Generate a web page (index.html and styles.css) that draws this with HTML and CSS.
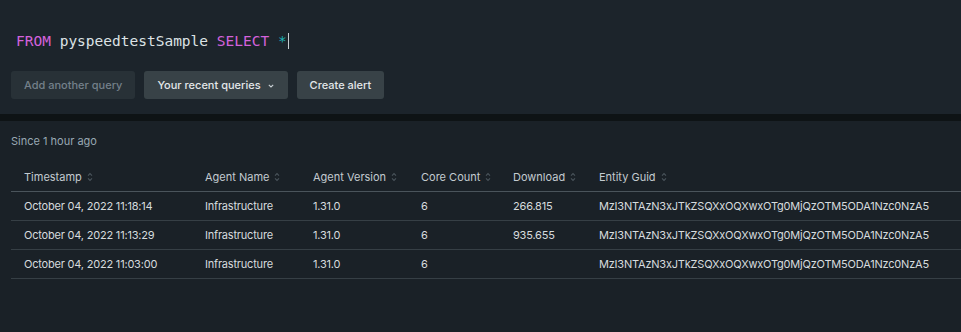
FILE: index.html
```html
<!DOCTYPE html>
<html>
    <head>
        <title>Query results</title>
        <meta charset="UTF-8">
        <meta name="viewport" content="width=device-width, initial-scale=1.0">
        <link rel="stylesheet" href="styles.css">
    </head>
    <body>
        <div class="editor">
            <div class="query"><span class="kw">FROM</span> pyspeedtestSample <span class="kw">SELECT</span> <span class="star">*</span><span class="cursor"></span></div>
            <div class="actions">
                <button class="btn btn-disabled">Add another query</button>
                <button class="btn">Your recent queries
                    <svg class="caret" width="8" height="6" viewBox="0 0 8 6"><path d="M1.8 1.8 L4 4 L6.2 1.8" fill="none" stroke="#c9d0d4" stroke-width="1.1"/></svg>
                </button>
                <button class="btn">Create alert</button>
            </div>
        </div>
        <div class="band"></div>
        <div class="results">
            <div class="since">Since 1 hour ago</div>
            <table class="grid">
                <colgroup>
                    <col style="width:181px">
                    <col style="width:108px">
                    <col style="width:108px">
                    <col style="width:92px">
                    <col style="width:86px">
                    <col>
                </colgroup>
                <thead>
                    <tr>
                        <th>Timestamp<span class="sort"></span></th>
                        <th>Agent Name<span class="sort"></span></th>
                        <th>Agent Version<span class="sort"></span></th>
                        <th>Core Count<span class="sort"></span></th>
                        <th>Download<span class="sort"></span></th>
                        <th>Entity Guid<span class="sort"></span></th>
                    </tr>
                </thead>
                <tbody id="rows"></tbody>
            </table>
        </div>
        <script>
            var SORT_ICON = '<svg width="6" height="10" viewBox="0 0 6 10"><path d="M1 3.6 L3 1.6 L5 3.6 M1 6.4 L3 8.4 L5 6.4" fill="none" stroke="#4a545b" stroke-width="1.1"/></svg>';
            var GUID = "MzI3NTAzN3xJTkZSQXxOQXwxOTg0MjQzOTM5ODA1Nzc0NzA5";
            var data = [
                ["October 04, 2022 11:18:14", "Infrastructure", "1.31.0", "6", "266.815", GUID],
                ["October 04, 2022 11:13:29", "Infrastructure", "1.31.0", "6", "935.655", GUID],
                ["October 04, 2022 11:03:00", "Infrastructure", "1.31.0", "6", "", GUID]
            ];
            var sorts = document.querySelectorAll(".sort");
            for (var i = 0; i < sorts.length; i++) {
                sorts[i].innerHTML = SORT_ICON;
            }
            var html = "";
            for (var r = 0; r < data.length; r++) {
                html += "<tr>";
                for (var c = 0; c < data[r].length; c++) {
                    html += "<td>" + data[r][c] + "</td>";
                }
                html += "</tr>";
            }
            document.getElementById("rows").innerHTML = html;
        </script>
    </body>
</html>
```

FILE: styles.css
```css
body{
    margin: 0px;
    background-color: #1a2127;
    font-family: Inter, "Noto Sans", sans-serif;
    overflow: hidden;
}
.editor{
    background-color: #1c242b;
    height: 114px;
    padding: 31px 0px 0px 0px;
    box-sizing: border-box;
}
.query{
    font-family: "DejaVu Sans Mono", monospace;
    font-size: 14.5px;
    line-height: 20px;
    height: 20px;
    color: #dde2e5;
    padding-left: 16px;
    white-space: pre;
}
.query .kw{
    color: #d362dc;
}
.query .star{
    color: #1fb1b6;
}
.cursor{
    display: inline-block;
    width: 1px;
    height: 16px;
    background-color: #c8ced2;
    margin-left: 1px;
    vertical-align: -3px;
}
.actions{
    display: flex;
    gap: 9px;
    padding-left: 11px;
    margin-top: 20px;
}
.btn{
    height: 28px;
    border: none;
    border-radius: 3px;
    background-color: #384247;
    color: #e3e7e9;
    font-family: Inter, "Noto Sans", sans-serif;
    font-size: 11px;
    font-weight: 500;
    padding: 0px 13px;
    display: flex;
    align-items: center;
    gap: 6px;
}
.btn-disabled{
    background-color: #283137;
    color: #74808a;
}
.caret{
    margin-top: 1px;
}
.band{
    height: 7px;
    background-color: #0e1315;
}
.results{
    padding: 10px 0px 0px 11px;
}
.since{
    font-size: 11px;
    line-height: 20px;
    color: #98a8b3;
}
.grid{
    width: 100%;
    margin-top: 12px;
    border-collapse: collapse;
    table-layout: fixed;
    font-size: 11px;
}
.grid th{
    text-align: left;
    font-weight: 400;
    color: #c3cbd0;
    height: 28px;
    padding: 0px 0px 0px 13px;
    border-bottom: 1px solid #4a545b;
    white-space: nowrap;
}
.grid td{
    color: #d6dbde;
    height: 28px;
    padding: 0px 0px 0px 13px;
    border-bottom: 1px solid #363f45;
    white-space: nowrap;
    letter-spacing: -0.2px;
}
.sort{
    display: inline-block;
    vertical-align: middle;
    margin-left: 5px;
    margin-top: -2px;
}
.sort svg{
    display: block;
}
```
